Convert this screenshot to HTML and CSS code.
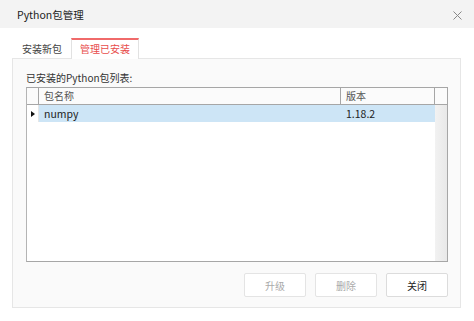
FILE: index.html
```html
<!DOCTYPE html>
<html lang="zh-CN">
<head>
    <meta charset="UTF-8">
    <title>Python包管理</title>
    <link rel="stylesheet" href="styles.css">
</head>
<body>
    <div class="dialog">
        <div class="titlebar">
            <span class="title">Python包管理</span>
            <span class="close">
                <svg width="9" height="9" viewBox="0 0 9 9"><path d="M0.5 0.5L8.5 8.5M8.5 0.5L0.5 8.5" stroke="#888" stroke-width="1" fill="none"/></svg>
            </span>
        </div>
        <div class="content">
            <div class="tabs">
                <div class="tab">安装新包</div>
                <div class="tab active">管理已安装</div>
            </div>
            <div class="panel">
                <div class="list-label">已安装的Python包列表:</div>
                <div class="grid">
                    <div class="grid-head">
                        <div class="cell rowhead"></div>
                        <div class="cell col-name">包名称</div>
                        <div class="cell col-ver">版本</div>
                        <div class="cell col-fill"></div>
                    </div>
                    <div class="grid-body">
                        <div class="grid-rows">
                            <div class="grid-row selected">
                                <div class="cell rowhead"><span class="arrow"></span></div>
                                <div class="cell col-name">numpy</div>
                                <div class="cell col-ver">1.18.2</div>
                            </div>
                        </div>
                        <div class="scroll-fill"></div>
                    </div>
                </div>
                <div class="buttons">
                    <button class="btn" disabled>升级</button>
                    <button class="btn" disabled>删除</button>
                    <button class="btn">关闭</button>
                </div>
            </div>
        </div>
    </div>
</body>
</html>
```

FILE: styles.css
```css
body {
    margin: 0;
    font-family: "Noto Sans CJK SC", "Noto Sans", sans-serif;
    font-size: 10px;
    color: #333;
    background: #fff;
}

.dialog {
    width: 474px;
    height: 321px;
    display: flex;
    flex-direction: column;
}

.titlebar {
    height: 28px;
    background: #f3f3f3;
    display: flex;
    align-items: center;
    justify-content: space-between;
    padding: 0 12px 0 17px;
}

.title {
    font-size: 10.5px;
    color: #222;
    margin-top: 1px;
}

.close {
    display: flex;
    margin-top: 2px;
}

.content {
    padding: 10px 13px 0 12px;
}

.tabs {
    display: flex;
    align-items: flex-end;
    height: 20px;
    padding-left: 1px;
}

.tab {
    padding: 0 9px;
    height: 18px;
    line-height: 18px;
    color: #444;
}

.tab.active {
    height: 19px;
    line-height: 18px;
    background: #fff;
    color: #e84c4c;
    border-top: 2px solid #f06a6a;
    border-left: 1px solid #e2e2e2;
    border-right: 1px solid #e2e2e2;
    padding: 0 8px;
    margin-bottom: -1px;
    position: relative;
    z-index: 1;
}

.panel {
    height: 250px;
    box-sizing: border-box;
    border: 1px solid #e6e6e6;
    background: #fafafa;
    padding: 11px 12px 0 13px;
    display: flex;
    flex-direction: column;
}

.list-label {
    height: 16px;
    line-height: 16px;
    color: #333;
}

.grid {
    margin-top: 1px;
    height: 175px;
    box-sizing: border-box;
    border: 1px solid #a6a6a6;
    border-left-color: #b4b4b4;
    background: #fff;
    display: flex;
    flex-direction: column;
}

.grid-head {
    display: flex;
    height: 16px;
    border-bottom: 1px solid #a6a6a6;
}

.grid-head .cell {
    border-right: 1px solid #a6a6a6;
    background: #fbfbfb;
}

.cell {
    box-sizing: border-box;
    line-height: 16px;
    padding-left: 5px;
    color: #555;
}

.rowhead {
    width: 12px;
    flex: none;
    padding: 0;
}

.col-name {
    width: 302px;
    flex: none;
}

.col-ver {
    width: 94px;
    flex: none;
}

.col-fill {
    flex: 1;
}

.grid-head .col-fill {
    border-right: none;
}

.grid-body {
    flex: 1;
    display: flex;
}

.grid-rows {
    width: 408px;
}

.grid-row {
    display: flex;
    height: 17px;
}

.grid-row .cell {
    line-height: 17px;
    color: #222;
    font-size: 10.5px;
}

.grid-row.selected .col-name,
.grid-row.selected .col-ver {
    background: #cde5f6;
}

.grid-row .rowhead {
    display: flex;
    align-items: center;
    justify-content: center;
    border-right: 1px solid #e6e6e6;
}

.arrow {
    width: 0;
    height: 0;
    border-top: 3px solid transparent;
    border-bottom: 3px solid transparent;
    border-left: 4px solid #111;
    margin-left: 1px;
}

.scroll-fill {
    flex: 1;
    background: linear-gradient(to right, #f2f2f2, #e8e8e8);
}

.buttons {
    display: flex;
    justify-content: flex-end;
    gap: 9px;
    margin-top: 11px;
}

.btn {
    width: 62px;
    height: 24px;
    box-sizing: border-box;
    border: 1px solid #dcdcdc;
    border-radius: 2px;
    background: #fff;
    font-family: "Noto Sans CJK SC", sans-serif;
    font-size: 10px;
    color: #222;
    padding: 0;
}

.btn:disabled {
    color: #aaa;
    border-color: #e4e4e4;
}
```
